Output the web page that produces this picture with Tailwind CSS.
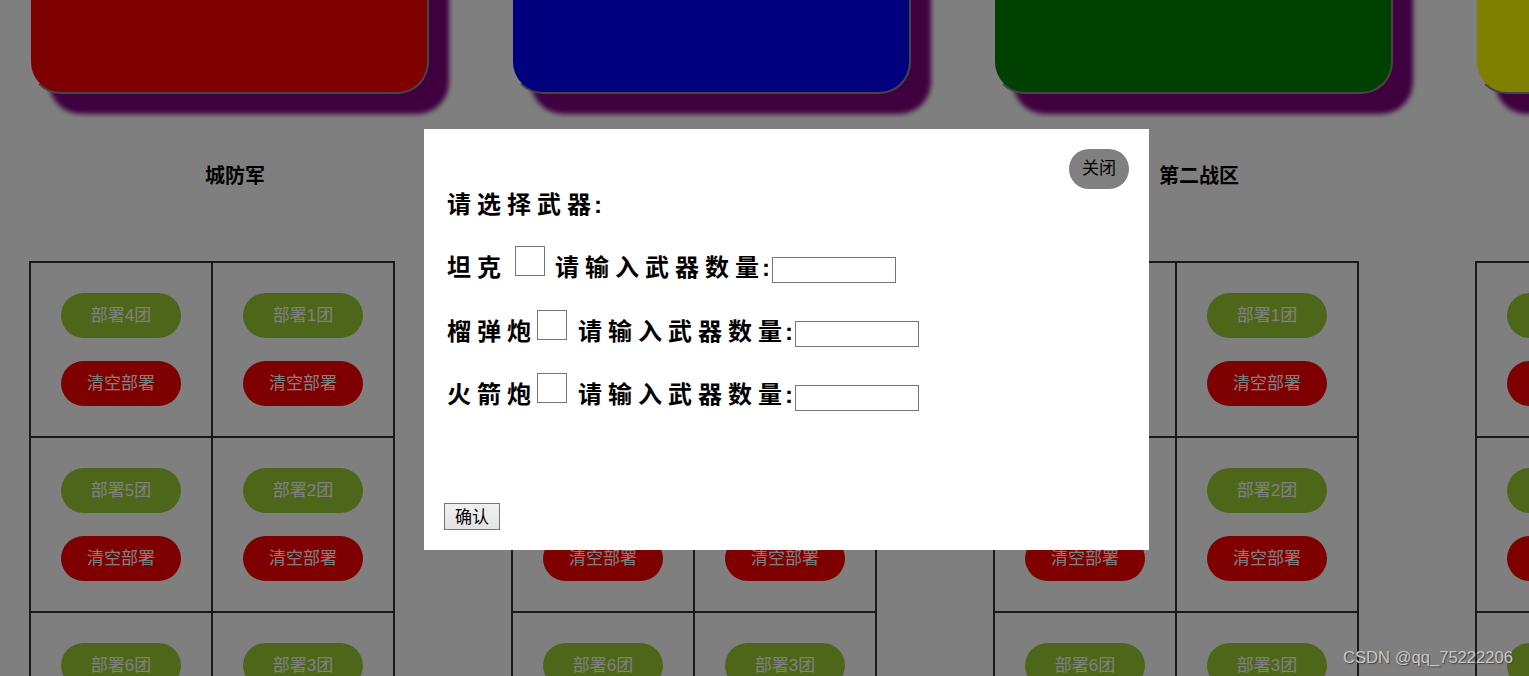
<!DOCTYPE html>
<html>
    <head>
        <meta charset="UTF-8">
        <title>部署</title>
        <script src="https://cdn.jsdelivr.net/npm/@tailwindcss/browser@4"></script>
    </head>
    <body class="bg-white font-['Liberation_Sans','Noto_Sans_CJK_SC',sans-serif]">
        <div class="relative h-[676px] overflow-hidden">
            <div class="flex gap-[84px] pl-[30px] -mt-[107px] w-[2000px]">

                <section class="w-[398px] shrink-0">
                    <div class="w-[400px] -ml-px h-[201px] bg-[#ff0000] rounded-[32px] border-2 border-t-white border-l-white border-r-[#8c8c8c] border-b-[#8c8c8c] shadow-[20px_20px_5px_#800080]"></div>
                    <h2 class="mt-[69px] pl-[175px] h-[26px] text-xl leading-[26px] font-bold">城防军</h2>
                    <div class="mt-[72px] grid grid-cols-[182px_182px] w-[366px] border-2 border-[#333] border-b-0 -ml-px">
                        <div class="h-[175px] pt-[30px] border-r-2 border-b-2 border-[#333] flex flex-col items-center gap-[23px]"><button class="w-[120px] h-[45px] pt-px rounded-[23px] bg-[#9acd32] text-white text-[17px]">部署4团</button><button class="w-[120px] h-[45px] pt-px rounded-[23px] bg-[#ff0000] text-white text-[17px]">清空部署</button></div>
                        <div class="h-[175px] pt-[30px] pr-0.5 border-b-2 border-[#333] flex flex-col items-center gap-[23px]"><button class="w-[120px] h-[45px] pt-px rounded-[23px] bg-[#9acd32] text-white text-[17px]">部署1团</button><button class="w-[120px] h-[45px] pt-px rounded-[23px] bg-[#ff0000] text-white text-[17px]">清空部署</button></div>
                        <div class="h-[175px] pt-[30px] border-r-2 border-b-2 border-[#333] flex flex-col items-center gap-[23px]"><button class="w-[120px] h-[45px] pt-px rounded-[23px] bg-[#9acd32] text-white text-[17px]">部署5团</button><button class="w-[120px] h-[45px] pt-px rounded-[23px] bg-[#ff0000] text-white text-[17px]">清空部署</button></div>
                        <div class="h-[175px] pt-[30px] pr-0.5 border-b-2 border-[#333] flex flex-col items-center gap-[23px]"><button class="w-[120px] h-[45px] pt-px rounded-[23px] bg-[#9acd32] text-white text-[17px]">部署2团</button><button class="w-[120px] h-[45px] pt-px rounded-[23px] bg-[#ff0000] text-white text-[17px]">清空部署</button></div>
                        <div class="h-[175px] pt-[30px] border-r-2 border-b-2 border-[#333] flex flex-col items-center gap-[23px]"><button class="w-[120px] h-[45px] pt-px rounded-[23px] bg-[#9acd32] text-white text-[17px]">部署6团</button></div>
                        <div class="h-[175px] pt-[30px] pr-0.5 border-b-2 border-[#333] flex flex-col items-center gap-[23px]"><button class="w-[120px] h-[45px] pt-px rounded-[23px] bg-[#9acd32] text-white text-[17px]">部署3团</button></div>
                    </div>
                </section>

                <section class="w-[398px] shrink-0">
                    <div class="w-[400px] -ml-px h-[201px] bg-[#0000ff] rounded-[32px] border-2 border-t-white border-l-white border-r-[#8c8c8c] border-b-[#8c8c8c] shadow-[20px_20px_5px_#800080]"></div>
                    <h2 class="mt-[69px] pl-[165px] h-[26px] text-xl leading-[26px] font-bold">第一战区</h2>
                    <div class="mt-[72px] grid grid-cols-[182px_182px] w-[366px] border-2 border-[#333] border-b-0 -ml-px">
                        <div class="h-[175px] pt-[30px] border-r-2 border-b-2 border-[#333] flex flex-col items-center gap-[23px]"><button class="w-[120px] h-[45px] pt-px rounded-[23px] bg-[#9acd32] text-white text-[17px]">部署4团</button><button class="w-[120px] h-[45px] pt-px rounded-[23px] bg-[#ff0000] text-white text-[17px]">清空部署</button></div>
                        <div class="h-[175px] pt-[30px] pr-0.5 border-b-2 border-[#333] flex flex-col items-center gap-[23px]"><button class="w-[120px] h-[45px] pt-px rounded-[23px] bg-[#9acd32] text-white text-[17px]">部署1团</button><button class="w-[120px] h-[45px] pt-px rounded-[23px] bg-[#ff0000] text-white text-[17px]">清空部署</button></div>
                        <div class="h-[175px] pt-[30px] border-r-2 border-b-2 border-[#333] flex flex-col items-center gap-[23px]"><button class="w-[120px] h-[45px] pt-px rounded-[23px] bg-[#9acd32] text-white text-[17px]">部署5团</button><button class="w-[120px] h-[45px] pt-px rounded-[23px] bg-[#ff0000] text-white text-[17px]">清空部署</button></div>
                        <div class="h-[175px] pt-[30px] pr-0.5 border-b-2 border-[#333] flex flex-col items-center gap-[23px]"><button class="w-[120px] h-[45px] pt-px rounded-[23px] bg-[#9acd32] text-white text-[17px]">部署2团</button><button class="w-[120px] h-[45px] pt-px rounded-[23px] bg-[#ff0000] text-white text-[17px]">清空部署</button></div>
                        <div class="h-[175px] pt-[30px] border-r-2 border-b-2 border-[#333] flex flex-col items-center gap-[23px]"><button class="w-[120px] h-[45px] pt-px rounded-[23px] bg-[#9acd32] text-white text-[17px]">部署6团</button></div>
                        <div class="h-[175px] pt-[30px] pr-0.5 border-b-2 border-[#333] flex flex-col items-center gap-[23px]"><button class="w-[120px] h-[45px] pt-px rounded-[23px] bg-[#9acd32] text-white text-[17px]">部署3团</button></div>
                    </div>
                </section>

                <section class="w-[398px] shrink-0">
                    <div class="w-[400px] -ml-px h-[201px] bg-[#008000] rounded-[32px] border-2 border-t-white border-l-white border-r-[#8c8c8c] border-b-[#8c8c8c] shadow-[20px_20px_5px_#800080]"></div>
                    <h2 class="mt-[69px] pl-[165px] h-[26px] text-xl leading-[26px] font-bold">第二战区</h2>
                    <div class="mt-[72px] grid grid-cols-[182px_182px] w-[366px] border-2 border-[#333] border-b-0 -ml-px">
                        <div class="h-[175px] pt-[30px] border-r-2 border-b-2 border-[#333] flex flex-col items-center gap-[23px]"><button class="w-[120px] h-[45px] pt-px rounded-[23px] bg-[#9acd32] text-white text-[17px]">部署4团</button><button class="w-[120px] h-[45px] pt-px rounded-[23px] bg-[#ff0000] text-white text-[17px]">清空部署</button></div>
                        <div class="h-[175px] pt-[30px] pr-0.5 border-b-2 border-[#333] flex flex-col items-center gap-[23px]"><button class="w-[120px] h-[45px] pt-px rounded-[23px] bg-[#9acd32] text-white text-[17px]">部署1团</button><button class="w-[120px] h-[45px] pt-px rounded-[23px] bg-[#ff0000] text-white text-[17px]">清空部署</button></div>
                        <div class="h-[175px] pt-[30px] border-r-2 border-b-2 border-[#333] flex flex-col items-center gap-[23px]"><button class="w-[120px] h-[45px] pt-px rounded-[23px] bg-[#9acd32] text-white text-[17px]">部署5团</button><button class="w-[120px] h-[45px] pt-px rounded-[23px] bg-[#ff0000] text-white text-[17px]">清空部署</button></div>
                        <div class="h-[175px] pt-[30px] pr-0.5 border-b-2 border-[#333] flex flex-col items-center gap-[23px]"><button class="w-[120px] h-[45px] pt-px rounded-[23px] bg-[#9acd32] text-white text-[17px]">部署2团</button><button class="w-[120px] h-[45px] pt-px rounded-[23px] bg-[#ff0000] text-white text-[17px]">清空部署</button></div>
                        <div class="h-[175px] pt-[30px] border-r-2 border-b-2 border-[#333] flex flex-col items-center gap-[23px]"><button class="w-[120px] h-[45px] pt-px rounded-[23px] bg-[#9acd32] text-white text-[17px]">部署6团</button></div>
                        <div class="h-[175px] pt-[30px] pr-0.5 border-b-2 border-[#333] flex flex-col items-center gap-[23px]"><button class="w-[120px] h-[45px] pt-px rounded-[23px] bg-[#9acd32] text-white text-[17px]">部署3团</button></div>
                    </div>
                </section>

                <!-- only the left edge of this column is on screen, so no labels here -->
                <section class="w-[398px] shrink-0">
                    <div class="w-[400px] -ml-px h-[201px] bg-[#ffff00] rounded-[32px] border-2 border-t-white border-l-white border-r-[#8c8c8c] border-b-[#8c8c8c] shadow-[20px_20px_5px_#800080]"></div>
                    <div class="mt-[69px] h-[26px]"></div>
                    <div class="mt-[72px] grid grid-cols-[182px_182px] w-[366px] border-2 border-[#333] border-b-0 -ml-px">
                        <div class="h-[175px] pt-[30px] border-r-2 border-b-2 border-[#333] flex flex-col items-center gap-[23px]"><div class="w-[120px] h-[45px] rounded-[23px] bg-[#9acd32]"></div><div class="w-[120px] h-[45px] rounded-[23px] bg-[#ff0000]"></div></div>
                        <div class="h-[175px] border-b-2 border-[#333]"></div>
                        <div class="h-[175px] pt-[30px] border-r-2 border-b-2 border-[#333] flex flex-col items-center gap-[23px]"><div class="w-[120px] h-[45px] rounded-[23px] bg-[#9acd32]"></div><div class="w-[120px] h-[45px] rounded-[23px] bg-[#ff0000]"></div></div>
                        <div class="h-[175px] border-b-2 border-[#333]"></div>
                        <div class="h-[175px] pt-[30px] border-r-2 border-b-2 border-[#333] flex flex-col items-center gap-[23px]"><div class="w-[120px] h-[45px] rounded-[23px] bg-[#9acd32]"></div></div>
                        <div class="h-[175px] border-b-2 border-[#333]"></div>
                    </div>
                </section>
            </div>

            <!-- mask -->
            <div class="absolute inset-0 bg-black/50"></div>

            <!-- weapon dialog -->
            <div class="absolute left-[424px] top-[129px] w-[725px] h-[421px] bg-white pl-[23px] pt-[60px] text-2xl font-bold tracking-[6px] text-black">
                <button class="absolute right-[20px] top-[20px] w-[60px] h-[40px] pt-px rounded-[20px] bg-[#808080] text-[17px] font-normal tracking-normal">关闭</button>
                <p class="h-[32px] leading-[32px] whitespace-nowrap">请选择武器<span class="-ml-[3px]">:</span></p>
                <p class="mt-[24px] h-[40px] flex items-start whitespace-nowrap">
                    <span class="mt-[7px]">坦克</span>
                    <input type="checkbox" class="appearance-none w-[30px] h-[30px] mt-px ml-[8px] border border-[#767676] bg-white">
                    <span class="mt-[7px] ml-[10px]">请输入武器数量<span class="-ml-[3px] tracking-normal">:</span></span>
                    <input type="text" class="w-[124px] h-[26px] mt-[12px] ml-[2px] border border-[#767676]">
                </p>
                <p class="mt-[24px] h-[40px] flex items-start whitespace-nowrap">
                    <span class="mt-[7px]">榴弹炮</span>
                    <input type="checkbox" class="appearance-none w-[30px] h-[30px] mt-px border border-[#767676] bg-white">
                    <span class="mt-[7px] ml-[11px]">请输入武器数量<span class="-ml-[3px] tracking-normal">:</span></span>
                    <input type="text" class="w-[124px] h-[26px] mt-[12px] ml-[2px] border border-[#767676]">
                </p>
                <p class="mt-[23px] h-[40px] flex items-start whitespace-nowrap">
                    <span class="mt-[7px]">火箭炮</span>
                    <input type="checkbox" class="appearance-none w-[30px] h-[30px] mt-px border border-[#767676] bg-white">
                    <span class="mt-[7px] ml-[11px]">请输入武器数量<span class="-ml-[3px] tracking-normal">:</span></span>
                    <input type="text" class="w-[124px] h-[26px] mt-[13px] ml-[2px] border border-[#767676]">
                </p>
                <button class="absolute left-[20px] top-[374px] w-[56px] h-[27px] pt-px border border-[#767676] bg-gradient-to-b from-[#f0f0f0] to-[#e3e3e3] text-[17px] leading-[25px] font-normal tracking-normal">确认</button>
            </div>

            <div class="absolute right-[16px] top-[648px] text-[16.6px] leading-[20px] text-[#c8c8c8] [text-shadow:1px_1px_1px_#444]">CSDN @qq_75222206</div>
        </div>
    </body>
</html>
